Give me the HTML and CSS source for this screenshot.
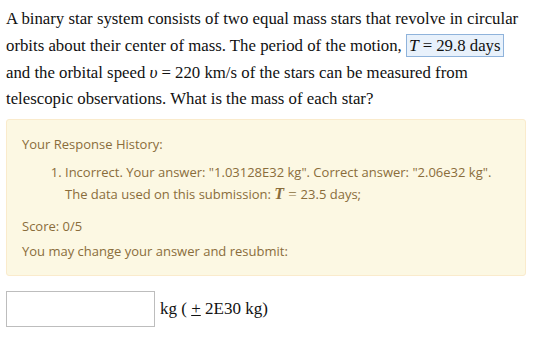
FILE: index.html
```html
<!DOCTYPE html>
<html>
<head>
<meta charset="utf-8">
<link rel="stylesheet" href="styles.css">
</head>
<body>
<div class="page">
  <p class="question">A binary star system consists of two equal mass stars that revolve in circular<br>orbits about their center of mass. The period of the motion, <span class="given"><i class="var">T</i><span class="eq">=</span>29.8 days</span><br>and the orbital speed <i class="var">υ</i><span class="eq">=</span>220 km/s of the stars can be measured from<br>telescopic observations. What is the mass of each star?</p>
  <div class="history">
    <div class="hist-title">Your Response History:</div>
    <ol class="hist-list">
      <li>Incorrect. Your answer: "1.03128E32 kg". Correct answer: "2.06e32 kg".<br>The data used on this submission: <i class="mvar">T</i><span class="meq">=</span>23.5 days;</li>
    </ol>
    <div class="score">Score: 0/5</div>
    <div class="resubmit">You may change your answer and resubmit:</div>
  </div>
  <div class="answer-row">
    <input class="answer" type="text">
    <span class="unit">kg ( <u>+</u> 2E30 kg)</span>
  </div>
</div>
</body>
</html>
```
FILE: styles.css
```css
html, body { margin: 0; padding: 0; background: #fff; }
.page { padding: 6px 6px 0 6px; width: 540px; box-sizing: border-box; }
.question {
  margin: 0;
  font-family: "Liberation Serif", "DejaVu Serif", serif;
  font-size: 16.8px;
  line-height: 26px;
  color: #111;
  white-space: nowrap;
}
.var { font-family: "Liberation Serif", serif; font-size: 17.5px; }
.eq { margin: 0 4px; }
.given {
  background: #e8f1fb;
  border: 1px solid #8fb3db;
  padding: 1px 2px;
}
.history {
  margin-top: 7px;
  width: 520px;
  box-sizing: border-box;
  background: #fcf8e3;
  border: 1px solid #faebcc;
  border-radius: 3px;
  padding: 14px 15px 13px 15px;
  font-family: "Open Sans", "Noto Sans", sans-serif;
  font-size: 13px;
  color: #8a6d3b;
  line-height: 21px;
}
.hist-title { margin-bottom: 7px; }
.hist-list { margin: 0 0 11px 0; padding-left: 43px; }
.mvar { font-family: "Liberation Serif", serif; font-size: 16px; font-weight: bold; }
.meq { font-family: "Liberation Serif", serif; font-size: 15px; margin: 0 4px; }
.score { margin-bottom: 4px; }
.answer-row {
  margin-top: 15px;
  display: flex;
  align-items: center;
  gap: 5px;
}
.answer {
  width: 147px;
  height: 34px;
  box-sizing: content-box;
  border: 1px solid #bdbdbd;
  padding: 0;
  margin: 0;
}
.unit {
  font-family: "Liberation Serif", serif;
  font-size: 17px;
  color: #111;
}
```
